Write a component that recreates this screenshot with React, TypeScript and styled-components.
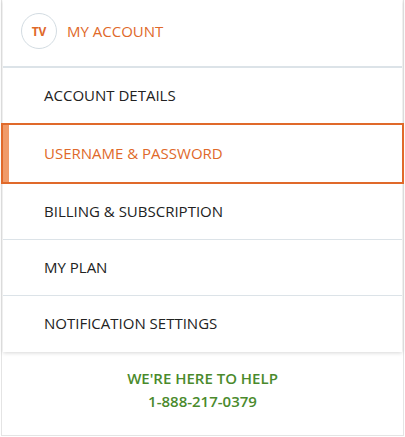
import * as React from 'react';
import styled, { createGlobalStyle } from 'styled-components';

const GlobalStyle = createGlobalStyle`
    body {
        margin: 0;
        background: #FFFFFF;
        font-family: "Open Sans", "Noto Sans", sans-serif;
    }
`

const Page = styled.div`
    width: 405px;
    padding: 0 1px;
    box-sizing: border-box;
`

const Outer = styled.div`
    border: 1px solid #E4E4E4;
    border-top: none;
    padding: 0 1px;
`

const Card = styled.div`
    background: #FFFFFF;
    box-shadow: 0 1px 4px rgba(0, 0, 0, 0.16);
`

const Header = styled.div`
    height: 68px;
    display: flex;
    align-items: center;
    padding: 0 0 4px 18px;
    box-sizing: border-box;
    border-bottom: 2px solid #DCE3E8;
`

const Avatar = styled.div`
    width: 36px;
    height: 36px;
    border-radius: 50%;
    border: 1px solid #D3DCE2;
    box-sizing: border-box;
    display: flex;
    align-items: center;
    justify-content: center;
    font-size: 12px;
    font-weight: 700;
    color: #E0692A;
    margin-right: 10px;
`

const HeaderTitle = styled.span`
    font-size: 15px;
    color: #E0692A;
`

const MenuItem = styled.div<{ $active?: boolean; $last?: boolean }>`
    height: 56px;
    display: flex;
    align-items: center;
    padding: 0 0 1px 41px;
    font-size: 15px;
    color: ${props => props.$active ? '#E0692A' : '#222222'};
    border-bottom: 1px solid ${props => props.$last ? 'transparent' : '#DCE3E8'};
    position: relative;
    box-sizing: border-box;
    ${props => props.$active && `
        height: 61px;
        margin: -1px -2px 0;
        border: 2px solid #E0692A;
        padding-left: 41px;
        &::before {
            content: '';
            position: absolute;
            left: 0;
            top: 0;
            bottom: 0;
            width: 6px;
            background: #F09A68;
        }
    `}
`

const Help = styled.div`
    height: 83px;
    display: flex;
    flex-direction: column;
    align-items: center;
    justify-content: center;
    color: #4A8A2C;
    font-size: 15px;
    font-weight: 600;
    line-height: 23px;
    padding-bottom: 8px;
    box-sizing: border-box;
`

const items = [
    'ACCOUNT DETAILS',
    'USERNAME & PASSWORD',
    'BILLING & SUBSCRIPTION',
    'MY PLAN',
    'NOTIFICATION SETTINGS'
];

export default function App() {
    return (
        <Page>
            <GlobalStyle />
            <Outer>
                <Card>
                    <Header>
                        <Avatar>TV</Avatar>
                        <HeaderTitle>MY ACCOUNT</HeaderTitle>
                    </Header>
                    {items.map((label, i) => (
                        <MenuItem
                            key={label}
                            $active={i === 1}
                            $last={i === items.length - 1}>
                            {label}
                        </MenuItem>
                    ))}
                </Card>
                <Help>
                    <span>WE'RE HERE TO HELP</span>
                    <span>1-888-217-0379</span>
                </Help>
            </Outer>
        </Page>
    );
}
